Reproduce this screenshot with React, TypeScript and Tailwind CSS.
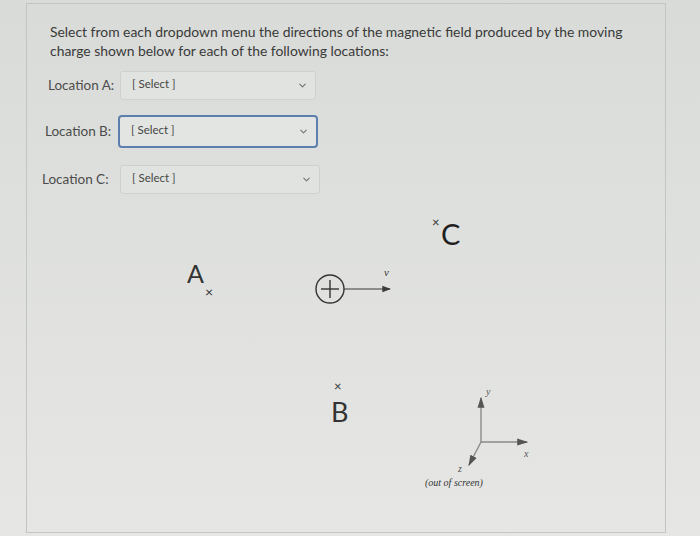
import React from 'react';
import { ChevronDown } from 'lucide-react';

interface LocationSelectProps {
  label: string;
  focused?: boolean;
  offset: string;
  labelWidth: string;
  width: string;
}

const LocationSelect: React.FC<LocationSelectProps> = ({ label, focused, offset, labelWidth, width }) => {
  return (
    <div className={`flex items-center h-[32px] ${offset}`}>
      <span className={`shrink-0 text-[13.5px] text-[#4b4c4b] ${labelWidth}`}>{label}</span>
      <div
        className={`flex items-center justify-between pl-[11px] pr-[7px] ${width} ${
          focused
            ? 'h-[33px] border-2 border-[#5d7fae] rounded-[4px] bg-[#e3e5e3]'
            : 'h-[29px] border border-[#cfd1cf] rounded-[3px] bg-[#e1e3e1]'
        }`}
      >
        <span className="text-[11.5px] text-[#454645] -mt-[3px]">[ Select ]</span>
        <ChevronDown className="w-[11px] h-[11px] text-[#6f716f]" strokeWidth={2.2} />
      </div>
    </div>
  );
};

// Moving charge, field points and axis key
const ChargeDiagram: React.FC = () => (
  <svg width="700" height="340" viewBox="0 200 700 340" className="block">
    <defs>
      <marker id="head" markerWidth="8" markerHeight="8" refX="7" refY="4" orient="auto">
        <path d="M0,1 L8,4 L0,7 Z" fill="#3b3b3b" />
      </marker>
      <marker id="axisHead" markerWidth="8" markerHeight="8" refX="7" refY="4" orient="auto">
        <path d="M0,1.5 L8,4 L0,6.5 Z" fill="#555" />
      </marker>
    </defs>

    {/* point C */}
    <text x="432" y="227" fontSize="13" fill="#333" fontFamily="Lato, sans-serif">×</text>
    <text x="441" y="245" fontSize="29" fill="#1f1f1f" fontFamily="Lato, sans-serif">C</text>

    {/* point A */}
    <text x="187" y="283" fontSize="25" fill="#333" fontFamily="Lato, sans-serif">A</text>
    <text x="205" y="297" fontSize="14" fill="#333" fontFamily="Lato, sans-serif">×</text>

    {/* charge and velocity */}
    <circle cx="330" cy="289" r="14" fill="none" stroke="#333" strokeWidth="1.4" />
    <line x1="330" y1="280" x2="330" y2="298" stroke="#333" strokeWidth="1.4" />
    <line x1="321" y1="289" x2="339" y2="289" stroke="#333" strokeWidth="1.4" />
    <line x1="344" y1="289" x2="390" y2="289" stroke="#3b3b3b" strokeWidth="1.1" markerEnd="url(#head)" />
    <text x="384" y="276" fontSize="11" fontStyle="italic" fill="#333" fontFamily="'Liberation Serif', serif">v</text>

    {/* point B */}
    <text x="334" y="391" fontSize="13" fill="#333" fontFamily="Lato, sans-serif">×</text>
    <text x="331" y="422" fontSize="27" fill="#333" fontFamily="Lato, sans-serif">B</text>

    {/* axes */}
    <line x1="481" y1="442" x2="481" y2="398" stroke="#8a8a8a" strokeWidth="1.4" markerEnd="url(#axisHead)" />
    <line x1="481" y1="442" x2="527" y2="442" stroke="#8a8a8a" strokeWidth="1.4" markerEnd="url(#axisHead)" />
    <line x1="481" y1="442" x2="469" y2="465" stroke="#8a8a8a" strokeWidth="1.4" markerEnd="url(#axisHead)" />
    <text x="486" y="395" fontSize="10" fontStyle="italic" fill="#555" fontFamily="'Liberation Serif', serif">y</text>
    <text x="524" y="457" fontSize="10" fontStyle="italic" fill="#555" fontFamily="'Liberation Serif', serif">x</text>
    <text x="458" y="472" fontSize="10" fontStyle="italic" fill="#555" fontFamily="'Liberation Serif', serif">z</text>
    <text x="425" y="486" fontSize="10" fontStyle="italic" fill="#333" fontFamily="'Liberation Serif', serif">(out of screen)</text>
  </svg>
);

export default function App() {
  return (
    <div className="relative w-[700px] h-[536px] overflow-hidden bg-gradient-to-b from-[#d9dbd8] to-[#e6e7e5] font-['Lato','Noto_Sans',sans-serif]">
      <div className="absolute left-[26px] top-[3px] w-[640px] h-[530px] border border-[#c3c5c2]" />
      <div className="relative">
        <div className="pt-[22px] pl-[50px] pr-[50px]">
          <p className="text-[13.9px] leading-[19px] text-[#393a39]">
            Select from each dropdown menu the directions of the magnetic field produced by the moving charge
            shown below for each of the following locations:
          </p>
        </div>
        <div className="mt-[9px] flex flex-col">
          <LocationSelect label="Location A:" offset="pl-[48px]" labelWidth="w-[72px]" width="w-[196px]" />
          <LocationSelect label="Location B:" focused offset="pl-[45px] mt-[14px]" labelWidth="w-[73px]" width="w-[200px]" />
          <LocationSelect label="Location C:" offset="pl-[42px] mt-[16px]" labelWidth="w-[78px]" width="w-[200px]" />
        </div>
      </div>
      <div className="absolute left-0 top-[200px]">
        <ChargeDiagram />
      </div>
    </div>
  );
}
